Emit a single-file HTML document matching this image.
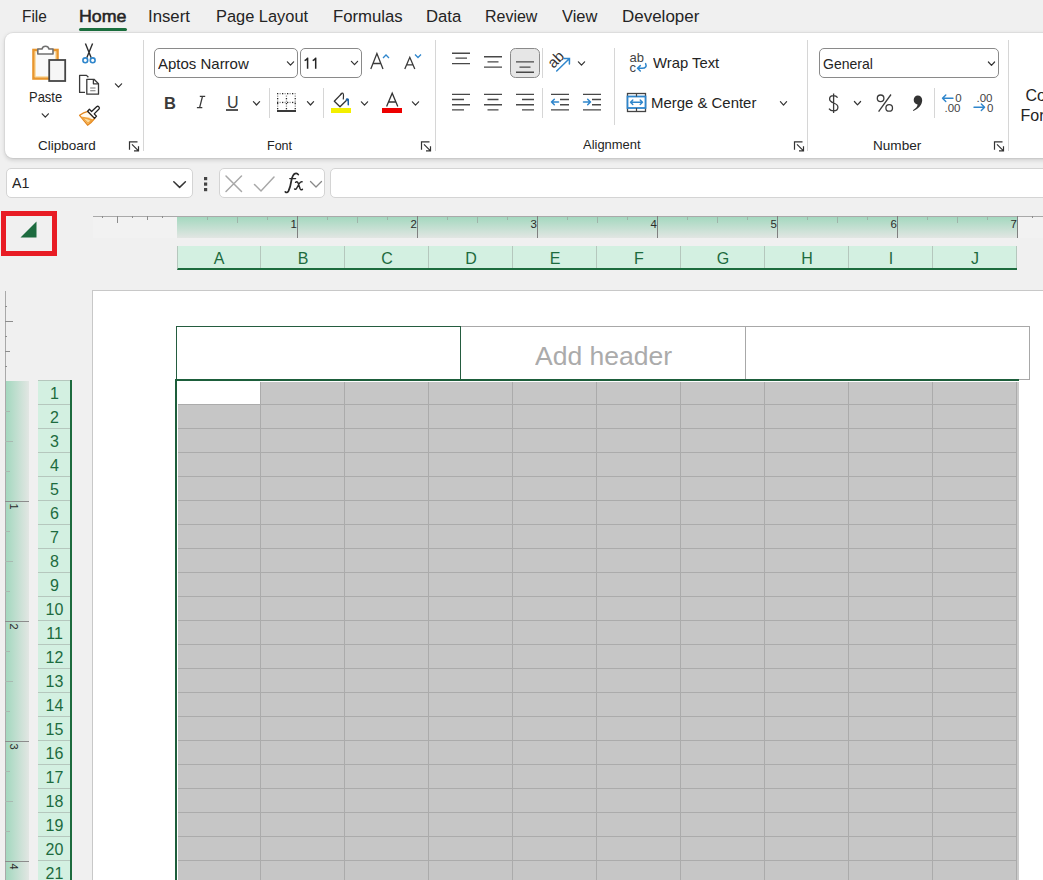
<!DOCTYPE html>
<html><head><meta charset="utf-8">
<style>
*{box-sizing:border-box;margin:0;padding:0}
html,body{width:1043px;height:880px;overflow:hidden;background:#f0f0f0;font-family:"Liberation Sans",sans-serif;color:#242424}
.a{position:absolute}
.t{position:absolute;white-space:nowrap;line-height:1}
.tab{position:absolute;top:8px;font-size:16.5px;line-height:1;white-space:nowrap;color:#242424}
#ribbon{position:absolute;left:5px;top:33px;width:1100px;height:125px;background:#fff;border-radius:8px;box-shadow:0 0 0 1px rgba(0,0,0,0.04),0 1.5px 4px rgba(0,0,0,0.16)}
.sep{position:absolute;width:1px;background:#d6d6d6}
.lbl{position:absolute;top:139px;font-size:13px;line-height:1;white-space:nowrap;color:#242424}
.chev{position:absolute}
.box{position:absolute;border:1px solid #8a8a8a;border-radius:5px;background:#fff}
</style></head><body>
<!-- tabs -->
<div id="tFile" class="tab" style="left:21.72px;font-size:17.4px;top:7.80px;transform-origin:0 0;transform:scaleX(0.8846)">File</div>
<div id="tHome" class="tab" style="left:78.97px;-webkit-text-stroke:0.55px #242424;font-size:17.4px;top:8.00px;transform-origin:0 0;transform:scaleX(1.0232)">Home</div>
<div class="a" style="left:79px;top:28px;width:48px;height:3px;border-radius:2px;background:#1a6e3d"></div>
<div id="tInsert" class="tab" style="left:148.44px;font-size:17.4px;top:8.00px;transform-origin:0 0;transform:scaleX(0.9631)">Insert</div>
<div id="tPage" class="tab" style="left:216.15px;font-size:17.4px;top:8.30px;transform-origin:0 0;transform:scaleX(0.9433)">Page Layout</div>
<div id="tFormulas" class="tab" style="left:333.14px;font-size:17.4px;top:8.20px;transform-origin:0 0;transform:scaleX(0.9620)">Formulas</div>
<div id="tData" class="tab" style="left:425.85px;font-size:17.4px;top:8.00px;transform-origin:0 0;transform:scaleX(0.9585)">Data</div>
<div id="tReview" class="tab" style="left:485.07px;font-size:17.4px;top:8.00px;transform-origin:0 0;transform:scaleX(0.9179)">Review</div>
<div id="tView" class="tab" style="left:562.40px;font-size:17.4px;top:8.00px;transform-origin:0 0;transform:scaleX(0.9474)">View</div>
<div id="tDev" class="tab" style="left:622.02px;font-size:17.4px;top:8.00px;transform-origin:0 0;transform:scaleX(0.9757)">Developer</div>

<div id="ribbon"></div>


<!-- ribbon content -->
<div class="sep" style="left:143px;top:40px;height:111px"></div>
<div class="sep" style="left:435px;top:40px;height:111px"></div>
<div class="sep" style="left:807px;top:40px;height:111px"></div>
<div class="sep" style="left:1008px;top:40px;height:111px"></div>
<div class="sep" style="left:269px;top:88px;height:30px"></div>
<div class="sep" style="left:323px;top:88px;height:30px"></div>
<div class="sep" style="left:542px;top:48px;height:30px"></div>
<div class="sep" style="left:542px;top:88px;height:30px"></div>
<div class="sep" style="left:934px;top:88px;height:30px"></div>
<div class="sep" style="left:614px;top:48px;height:77px"></div>

<div id="lClip" class="lbl" style="left:37.50px;font-size:13.3px;top:138.50px;transform-origin:0 0;transform:scaleX(1.0125)">Clipboard</div>
<div id="lFont" class="lbl" style="left:266.74px;font-size:12.9px;top:140.00px;transform-origin:0 0;transform:scaleX(0.9720)">Font</div>
<div id="lAlign" class="lbl" style="left:583.00px;font-size:13.1px;top:138.40px;transform-origin:0 0;transform:scaleX(0.9881)">Alignment</div>
<div id="lNum" class="lbl" style="left:873.36px;font-size:13px;top:138.70px;transform-origin:0 0;transform:scaleX(1.0444)">Number</div>
<div id="xPaste" class="t" style="left:29.14px;top:88.80px;font-size:15px;transform-origin:0 0;transform:scaleX(0.8625)">Paste</div>
<!-- font boxes -->
<div class="box" style="left:154px;top:48px;width:144px;height:30px"></div>
<div id="xAptos" class="t" style="left:157.80px;top:55.60px;font-size:15px;transform-origin:0 0;transform:scaleX(0.9989)">Aptos Narrow</div>
<div class="box" style="left:300px;top:48px;width:62px;height:30px"></div>
<svg class="a" style="left:300px;top:52px" width="24" height="22"><path d="M4.6 8.6 Q6.6 7.6 7.6 6.2 L7.6 16.8 M12.7 8.6 Q14.7 7.6 15.7 6.2 L15.7 16.8" fill="none" stroke="#242424" stroke-width="1.5" stroke-linejoin="round"/></svg>
<div class="box" style="left:819px;top:48px;width:180px;height:30px"></div>
<div id="xGeneral" class="t" style="left:822.80px;top:55.70px;font-size:15px;transform-origin:0 0;transform:scaleX(0.9341)">General</div>
<div id="xB" class="t" style="left:164px;top:95px;font-size:16.5px;font-weight:bold;color:#3a3a3a">B</div>
<svg class="a" style="left:190px;top:90px" width="22" height="22"><path d="M9.8 6.4 L15.2 6.4 M12.5 6.4 L9.6 17.6 M6.9 17.6 L12.3 17.6" fill="none" stroke="#3a3a3a" stroke-width="1.3"/></svg>
<div id="xU" class="t" style="left:227px;top:95px;font-size:16px;color:#3a3a3a">U</div>
<div class="a" style="left:226px;top:109px;width:12px;height:2px;background:#555"></div>
<div id="xWrap" class="t" style="left:652.60px;top:55.30px;font-size:15px;transform-origin:0 0;transform:scaleX(0.9881)">Wrap Text</div>
<div id="xMerge" class="t" style="left:651.40px;top:94.90px;font-size:15px;transform-origin:0 0;transform:scaleX(0.9953)">Merge &amp; Center</div>
<div id="xCo" class="t" style="left:1025.5px;top:87.8px;font-size:16px">Co</div>
<div id="xFor" class="t" style="left:1020.6px;top:107.8px;font-size:16px">For</div>
<svg class="a" style="left:0;top:0" width="1043" height="160">
<g fill="none" stroke="#333" stroke-width="1.2" stroke-linecap="round" stroke-linejoin="round">
<path d="M42.20 113.80 L45.30 117.20 L48.40 113.80"/>
<path d="M115.40 83.80 L118.50 87.20 L121.60 83.80"/>
<path d="M287.40 61.80 L290.50 65.20 L293.60 61.80"/>
<path d="M351.40 61.30 L354.50 64.70 L357.60 61.30"/>
<path d="M253.40 101.60 L256.50 105.00 L259.60 101.60"/>
<path d="M307.40 101.60 L310.50 105.00 L313.60 101.60"/>
<path d="M361.40 101.80 L364.50 105.20 L367.60 101.80"/>
<path d="M412.40 101.80 L415.50 105.20 L418.60 101.80"/>
<path d="M578.40 61.80 L581.50 65.20 L584.60 61.80"/>
<path d="M780.40 101.70 L783.50 105.10 L786.60 101.70"/>
<path d="M988.40 62.00 L991.50 65.40 L994.60 62.00"/>
<path d="M854.40 101.50 L857.50 104.90 L860.60 101.50"/>
</g>
<!-- paste -->
<rect x="33.5" y="50" width="24" height="28.5" fill="#f9f9f9" stroke="#e8962e" stroke-width="2.6"/>
<rect x="35.2" y="51.8" width="20.6" height="25" fill="none" stroke="#fbd48c" stroke-width="1"/>
<path d="M37.8 54 L37.8 49 L42 49 A3.6 3.6 0 0 1 49 49 L53 49 L53 54 Z" fill="#fff" stroke="#707070" stroke-width="1.6" stroke-linejoin="round"/>
<rect x="49.2" y="60" width="16" height="21" fill="#f6f6f6" stroke="#454545" stroke-width="1.8"/>
<!-- scissors -->
<g stroke="#2e2e2e" stroke-width="1.4" fill="none"><path d="M85.4 43.6 L91.2 57.8 M92.6 43.6 L86.8 57.8"/></g>
<g stroke="#2f86cc" stroke-width="1.6" fill="none"><circle cx="85.3" cy="60.3" r="2.4"/><circle cx="92.7" cy="60.3" r="2.4"/></g>
<!-- copy -->
<g stroke="#3a3a3a" stroke-width="1.3" fill="none" stroke-linejoin="round">
<path d="M85 92.4 L79.6 92.4 L79.6 75.4 L86.5 75.4 L88.4 77.3"/>
<path d="M86.8 79.3 L94 79.3 L98.5 83.8 L98.5 94.2 L86.8 94.2 Z" fill="#fff"/>
<path d="M93.4 79.3 L93.4 83.8 L98.5 83.8"/>
</g>
<g stroke="#777" stroke-width="1.1"><path d="M90.2 88 L95.5 88 M90.2 90.8 L95.5 90.8"/></g>
<!-- format painter -->
<path d="M87.8 111.4 Q83.5 112.6 79.6 115.3 L87.6 125.2 Q91.6 122.4 94.6 118.5 Z" fill="#fffaf0" stroke="#e3861c" stroke-width="1.3" stroke-linejoin="round"/>
<path d="M81 116.6 Q87.5 117.2 93.4 119.6 Q91 122.6 87.8 124.3 Z" fill="#f0a13a"/>
<path d="M84 118.6 Q87.5 119 90.3 120.4 Q89.2 121.7 87.9 122.4 Z" fill="#fdd998"/>
<path d="M87.6 111.2 L89.4 109.3 L91.6 111.5 L96.6 106.7 Q97.8 105.8 98.9 106.9 Q99.9 108 99 109 L94.2 113.9 L96.5 116.2 L94.6 118.4 Z" fill="#fff" stroke="#222" stroke-width="1.3" stroke-linejoin="round"/>
<!-- grow/shrink font -->
<g fill="none" stroke="#3a3a3a" stroke-width="1.3"><path d="M370.8 69 L376.9 53.6 L383 69 M373.2 63.5 L380.6 63.5"/><path d="M404.8 69 L409.8 57.3 L414.8 69 M406.6 64.8 L413 64.8"/></g>
<g fill="none" stroke="#2f86cc" stroke-width="1.3"><path d="M383 58 L386 55 L389 58"/><path d="M415 54.5 L418 57.5 L421 54.5"/></g>
<!-- borders -->
<rect x="277.00" y="93.00" width="1.3" height="1.3" fill="#2a2a2a"/>
<rect x="277.00" y="101.80" width="1.3" height="1.3" fill="#2a2a2a"/>
<rect x="279.50" y="93.00" width="1.3" height="1.3" fill="#9a9a9a"/>
<rect x="279.50" y="101.80" width="1.3" height="1.3" fill="#9a9a9a"/>
<rect x="282.00" y="93.00" width="1.3" height="1.3" fill="#2a2a2a"/>
<rect x="282.00" y="101.80" width="1.3" height="1.3" fill="#2a2a2a"/>
<rect x="284.50" y="93.00" width="1.3" height="1.3" fill="#9a9a9a"/>
<rect x="284.50" y="101.80" width="1.3" height="1.3" fill="#9a9a9a"/>
<rect x="287.00" y="93.00" width="1.3" height="1.3" fill="#2a2a2a"/>
<rect x="287.00" y="101.80" width="1.3" height="1.3" fill="#2a2a2a"/>
<rect x="289.50" y="93.00" width="1.3" height="1.3" fill="#9a9a9a"/>
<rect x="289.50" y="101.80" width="1.3" height="1.3" fill="#9a9a9a"/>
<rect x="292.00" y="93.00" width="1.3" height="1.3" fill="#2a2a2a"/>
<rect x="292.00" y="101.80" width="1.3" height="1.3" fill="#2a2a2a"/>
<rect x="294.50" y="93.00" width="1.3" height="1.3" fill="#9a9a9a"/>
<rect x="294.50" y="101.80" width="1.3" height="1.3" fill="#9a9a9a"/>
<rect x="277.00" y="95.50" width="1.3" height="1.3" fill="#9a9a9a"/>
<rect x="285.80" y="95.50" width="1.3" height="1.3" fill="#9a9a9a"/>
<rect x="294.60" y="95.50" width="1.3" height="1.3" fill="#9a9a9a"/>
<rect x="277.00" y="98.00" width="1.3" height="1.3" fill="#2a2a2a"/>
<rect x="285.80" y="98.00" width="1.3" height="1.3" fill="#2a2a2a"/>
<rect x="294.60" y="98.00" width="1.3" height="1.3" fill="#2a2a2a"/>
<rect x="277.00" y="100.50" width="1.3" height="1.3" fill="#9a9a9a"/>
<rect x="285.80" y="100.50" width="1.3" height="1.3" fill="#9a9a9a"/>
<rect x="294.60" y="100.50" width="1.3" height="1.3" fill="#9a9a9a"/>
<rect x="277.00" y="103.00" width="1.3" height="1.3" fill="#2a2a2a"/>
<rect x="285.80" y="103.00" width="1.3" height="1.3" fill="#2a2a2a"/>
<rect x="294.60" y="103.00" width="1.3" height="1.3" fill="#2a2a2a"/>
<rect x="277.00" y="105.50" width="1.3" height="1.3" fill="#9a9a9a"/>
<rect x="285.80" y="105.50" width="1.3" height="1.3" fill="#9a9a9a"/>
<rect x="294.60" y="105.50" width="1.3" height="1.3" fill="#9a9a9a"/>
<rect x="277.00" y="108.00" width="1.3" height="1.3" fill="#2a2a2a"/>
<rect x="285.80" y="108.00" width="1.3" height="1.3" fill="#2a2a2a"/>
<rect x="294.60" y="108.00" width="1.3" height="1.3" fill="#2a2a2a"/>
<rect x="277" y="110" width="19" height="2" fill="#3a3a3a"/>
<!-- fill color -->
<path d="M341.6 93.6 L334.3 101.2 L340 106.8 L346.6 100.2" fill="#fff" stroke="#333" stroke-width="1.3" stroke-linejoin="round"/>
<path d="M340.5 94.8 Q341.5 92.6 343 93.4 Q343.6 94 343.5 96 L343.3 99" fill="none" stroke="#333" stroke-width="1.2" stroke-linecap="round"/>
<circle cx="347.2" cy="99.6" r="1.4" fill="#1f5fa0"/>
<path d="M348.2 99.6 L348.3 104.8" stroke="#1f5fa0" stroke-width="1.5" stroke-linecap="round"/>
<rect x="331" y="108" width="20" height="5" fill="#f3ef00"/>
<!-- font color -->
<path d="M386.6 106.6 L392.2 93.2 L397.8 106.6 M388.6 102 L395.8 102" fill="none" stroke="#333" stroke-width="1.3"/>
<rect x="382" y="108" width="20" height="5" fill="#ee0000"/>
<!-- alignment lines -->
<g stroke="#484848" stroke-width="1.4">
<path d="M452 53.3 L470 53.3 M455.5 58.1 L467 58.1 M452 63.6 L470 63.6"/>
<path d="M484 56.7 L502 56.7 M487.5 61.9 L498.5 61.9 M484 67.1 L502 67.1"/>
<path d="M452 94.4 L470 94.4 M452 99.5 L464 99.5 M452 104.7 L470 104.7 M452 109.9 L464 109.9"/>
<path d="M484 94.4 L502 94.4 M487.5 99.5 L498.5 99.5 M484 104.7 L502 104.7 M487.5 109.9 L498.5 109.9"/>
<path d="M516 94.4 L534 94.4 M522 99.5 L534 99.5 M516 104.7 L534 104.7 M522 109.9 L534 109.9"/>
<path d="M551 94.4 L569 94.4 M560 99.5 L569 99.5 M560 104.7 L569 104.7 M551 109.9 L569 109.9"/>
<path d="M583 94.4 L601 94.4 M592 99.5 L601 99.5 M592 104.7 L601 104.7 M583 109.9 L601 109.9"/>
</g>
<rect x="510.5" y="48.5" width="29" height="29" rx="5" fill="#e6e6e6" stroke="#8a8a8a" stroke-width="1"/>
<g stroke="#484848" stroke-width="1.4"><path d="M516 61.9 L534 61.9 M519.5 67.1 L530.5 67.1 M516 72.3 L534 72.3"/></g>
<g stroke="#2f86cc" stroke-width="1.5" fill="none" stroke-linecap="round" stroke-linejoin="round">
<path d="M551.5 102 L558.5 102 M554.3 99.2 L551.5 102 L554.3 104.8"/>
<path d="M583.5 102 L590.5 102 M587.7 99.2 L590.5 102 L587.7 104.8"/>
</g>
<!-- orientation -->
<text x="0" y="0" font-family="Liberation Sans" font-size="15" fill="#333" transform="translate(553.4,68.9) rotate(-45)">ab</text>
<g stroke="#2f86cc" stroke-width="1.5" fill="none" stroke-linecap="round"><path d="M556.7 71 L569.5 58.5 M564 58.6 L569.5 58.5 L569.4 64"/></g>
<!-- wrap text -->
<text x="629.6" y="62.3" font-family="Liberation Sans" font-size="13" fill="#444">ab</text>
<text x="629.6" y="71.9" font-family="Liberation Sans" font-size="13" fill="#444">c</text>
<path d="M645.6 63.6 Q647.5 68 642 68.3 L637.8 68.3 M640.3 65.6 L637.5 68.3 L640.3 71" fill="none" stroke="#2f86cc" stroke-width="1.5" stroke-linecap="round" stroke-linejoin="round"/>
<!-- merge -->
<rect x="627.5" y="93.5" width="18" height="18" fill="#fff" stroke="#444" stroke-width="1.3"/>
<rect x="627.5" y="96.5" width="18" height="11.5" fill="#fff" stroke="#2f86cc" stroke-width="1.8"/>
<path d="M636.5 93.5 L636.5 96.5 M636.5 108 L636.5 111.5" stroke="#444" stroke-width="1.2"/>
<path d="M630.5 102.2 L642.5 102.2 M632.8 100 L630.5 102.2 L632.8 104.4 M640.2 100 L642.5 102.2 L640.2 104.4" fill="none" stroke="#2f86cc" stroke-width="1.4" stroke-linecap="round" stroke-linejoin="round"/>
<!-- comma -->
<path d="M837.6 97.6 C836.6 96.2 835.2 95.6 833.4 95.6 C830.9 95.6 829.6 97.1 829.6 99.1 C829.6 101.5 831.9 102.4 833.6 103 C835.7 103.7 837.9 104.8 837.9 107.3 C837.9 109.5 836 110.9 833.5 110.9 C831.4 110.9 829.9 110 829 108.6 M833.6 93.4 L833.6 113" fill="none" stroke="#3a3a3a" stroke-width="1.3"/>
<circle cx="880.6" cy="98.3" r="3.3" fill="none" stroke="#3a3a3a" stroke-width="1.3"/>
<circle cx="889.2" cy="107.9" r="3.3" fill="none" stroke="#3a3a3a" stroke-width="1.3"/>
<path d="M878.6 111.6 L891 94.5" stroke="#3a3a3a" stroke-width="1.3"/>
<path d="M917.8 95.4 C920.2 95.4 922.2 97.2 922.2 100 C922.2 104.8 918.6 108.8 913.4 111 L912.9 110.2 C916 108.4 917.4 106.5 917.6 104.5 C915.4 104.3 913.7 102.5 913.7 100 C913.7 97.3 915.5 95.4 917.8 95.4 Z" fill="#333"/>
<!-- decimals -->
<g font-family="Liberation Sans" font-size="11.5" fill="#444">
<text x="955.3" y="101.6">0</text><text x="944.5" y="111.8">.00</text>
<text x="976.5" y="101.6">.00</text><text x="987" y="111.8">0</text>
</g>
<g stroke="#2f86cc" stroke-width="1.4" fill="none" stroke-linecap="round" stroke-linejoin="round">
<path d="M942.5 98.3 L953 98.3 M945.8 95 L942.5 98.3 L945.8 101.6"/>
<path d="M974 107.3 L984.6 107.3 M981.3 104 L984.6 107.3 L981.3 110.6"/>
</g>
<!-- dialog launchers -->
<g stroke="#333" stroke-width="1.2" fill="none">
<path d="M129.5 149.8 L129.5 141.8 L137.5 141.8 M132 144.3 L138.5 150.8 M138.5 146.3 L138.5 150.8 L134 150.8"/>
<path d="M421.5 149.8 L421.5 141.8 L429.5 141.8 M424 144.3 L430.5 150.8 M430.5 146.3 L430.5 150.8 L426 150.8"/>
<path d="M794.5 149.8 L794.5 141.8 L802.5 141.8 M797 144.3 L803.5 150.8 M803.5 146.3 L803.5 150.8 L799 150.8"/>
<path d="M994.5 149.8 L994.5 141.8 L1002.5 141.8 M997 144.3 L1003.5 150.8 M1003.5 146.3 L1003.5 150.8 L999 150.8"/>
</g>
</svg>

<!-- formula bar -->
<div class="box" style="left:6px;top:168px;width:187px;height:30px;border-color:#d4d4d4;border-radius:5px"></div>
<div id="xA1" class="t" style="left:12.48px;top:174.50px;font-size:15px;transform-origin:0 0;transform:scaleX(0.9492)">A1</div>
<div class="box" style="left:219px;top:168px;width:106px;height:30px;border-color:#d4d4d4;border-radius:5px"></div>
<div class="box" style="left:330px;top:168px;width:800px;height:30px;border-color:#d4d4d4;border-radius:5px"></div>


<svg class="a" style="left:0;top:160px" width="400" height="40">
<g fill="none" stroke="#333" stroke-width="1.5" stroke-linecap="round" stroke-linejoin="round"><path d="M173.8 21.8 L179.6 27.4 L185.4 21.8"/></g>
<g fill="#444"><rect x="204" y="17" width="3.2" height="3.2"/><rect x="204" y="22.5" width="3.2" height="3.2"/><rect x="204" y="28" width="3.2" height="3.2"/></g>
<g fill="none" stroke="#a8a8a8" stroke-width="1.5" stroke-linecap="round"><path d="M226 16 L241.5 31.5 M241.5 16 L226 31.5"/><path d="M254.5 24.5 L261 31 L274 17"/></g>
<g fill="none" stroke="#888" stroke-width="1.3" stroke-linecap="round" stroke-linejoin="round"><path d="M310.5 21.5 L316 27 L321.5 21.5"/></g>
</svg>
<svg class="a" style="left:280px;top:168px" width="30" height="30"><g fill="none" stroke="#2a2a2a" stroke-linecap="round"><path d="M5.3 23.8 Q7 25.5 8.5 23 Q10.3 19.5 11.3 13 Q12.6 6.3 15 5.6 Q17.3 5 18.3 6.6" stroke-width="1.7"/><path d="M9.8 10.6 L15.6 10.6" stroke-width="1.4"/><path d="M15.6 14.3 Q17.5 13 18.3 15.5 L20 20.5 Q20.8 22.5 22.4 21.3 M22 13.8 Q20.5 13.3 19 16 L16.8 20 Q15.8 22 14.6 21" stroke-width="1.5"/></g></svg>

<!-- select-all red box -->
<div class="a" style="left:1px;top:211px;width:56px;height:45px;border:5px solid #e81c24"></div>
<svg class="a" style="left:20px;top:221px" width="17" height="17"><path d="M0.5 16.5 L16.5 0.5 L16.5 16.5 Z" fill="#1d6b3f"/></svg>

<!-- page -->
<div class="a" style="left:92px;top:290px;width:1000px;height:700px;background:#fff;border-left:1px solid #c8c8c8;border-top:1px solid #c8c8c8"></div>


<!-- horizontal ruler -->
<div class="a" style="left:93px;top:216px;width:950px;height:1px;background:#a9a9a9"></div>
<div class="a" style="left:93px;top:217px;width:84px;height:21px;background:#f2f2f2"></div>
<div class="a" style="left:1018px;top:217px;width:25px;height:21px;background:#f2f2f2"></div>
<div class="a" style="left:177px;top:217px;width:841px;height:21px;background:linear-gradient(#a4d8bf,#e2e6e3)"></div>
<svg class="a" style="left:0;top:0" width="1043" height="260">
<g stroke-width="1" shape-rendering="crispEdges">
<line x1="102.5" y1="216" x2="102.5" y2="218" stroke="#8c8c8c"/>
<line x1="117.5" y1="216" x2="117.5" y2="223" stroke="#8c8c8c"/>
<line x1="132.5" y1="216" x2="132.5" y2="218" stroke="#8c8c8c"/>
<line x1="147.5" y1="216" x2="147.5" y2="220" stroke="#8c8c8c"/>
<line x1="162.5" y1="216" x2="162.5" y2="218" stroke="#8c8c8c"/>
<line x1="207.5" y1="216" x2="207.5" y2="220" stroke="#9fb3a9"/>
<line x1="237.5" y1="216" x2="237.5" y2="223" stroke="#9fb3a9"/>
<line x1="267.5" y1="216" x2="267.5" y2="220" stroke="#9fb3a9"/>
<line x1="297.5" y1="216" x2="297.5" y2="238" stroke="#808080"/>
<line x1="327.5" y1="216" x2="327.5" y2="220" stroke="#9fb3a9"/>
<line x1="357.5" y1="216" x2="357.5" y2="223" stroke="#9fb3a9"/>
<line x1="387.5" y1="216" x2="387.5" y2="220" stroke="#9fb3a9"/>
<line x1="417.5" y1="216" x2="417.5" y2="238" stroke="#808080"/>
<line x1="447.5" y1="216" x2="447.5" y2="220" stroke="#9fb3a9"/>
<line x1="477.5" y1="216" x2="477.5" y2="223" stroke="#9fb3a9"/>
<line x1="507.5" y1="216" x2="507.5" y2="220" stroke="#9fb3a9"/>
<line x1="537.5" y1="216" x2="537.5" y2="238" stroke="#808080"/>
<line x1="567.5" y1="216" x2="567.5" y2="220" stroke="#9fb3a9"/>
<line x1="597.5" y1="216" x2="597.5" y2="223" stroke="#9fb3a9"/>
<line x1="627.5" y1="216" x2="627.5" y2="220" stroke="#9fb3a9"/>
<line x1="657.5" y1="216" x2="657.5" y2="238" stroke="#808080"/>
<line x1="687.5" y1="216" x2="687.5" y2="220" stroke="#9fb3a9"/>
<line x1="717.5" y1="216" x2="717.5" y2="223" stroke="#9fb3a9"/>
<line x1="747.5" y1="216" x2="747.5" y2="220" stroke="#9fb3a9"/>
<line x1="777.5" y1="216" x2="777.5" y2="238" stroke="#808080"/>
<line x1="807.5" y1="216" x2="807.5" y2="220" stroke="#9fb3a9"/>
<line x1="837.5" y1="216" x2="837.5" y2="223" stroke="#9fb3a9"/>
<line x1="867.5" y1="216" x2="867.5" y2="220" stroke="#9fb3a9"/>
<line x1="897.5" y1="216" x2="897.5" y2="238" stroke="#808080"/>
<line x1="927.5" y1="216" x2="927.5" y2="220" stroke="#9fb3a9"/>
<line x1="957.5" y1="216" x2="957.5" y2="223" stroke="#9fb3a9"/>
<line x1="987.5" y1="216" x2="987.5" y2="220" stroke="#9fb3a9"/>
<line x1="1017.5" y1="216" x2="1017.5" y2="238" stroke="#808080"/>
<line x1="1032.5" y1="216" x2="1032.5" y2="218" stroke="#8c8c8c"/>
</g>
<g font-family="Liberation Sans" font-size="11.5" fill="#2b2b2b">
<text x="290.4" y="227.8">1</text>
<text x="410.4" y="227.8">2</text>
<text x="530.4" y="227.8">3</text>
<text x="650.4" y="227.8">4</text>
<text x="770.4" y="227.8">5</text>
<text x="890.4" y="227.8">6</text>
<text x="1010.4" y="227.8">7</text>
</g>
</svg>
<!-- column headers -->
<div class="a" style="left:177px;top:246px;width:840px;height:24px;background:#d3f0e1;border-bottom:2px solid #1d6b3e;border-left:1px solid #b5c7bd"></div>
<div class="t" style="left:177px;top:251px;width:84px;text-align:center;font-size:16px;color:#1d6b3e">A</div>
<div class="t" style="left:261px;top:251px;width:84px;text-align:center;font-size:16px;color:#1d6b3e">B</div>
<div class="a" style="left:260px;top:246px;width:1px;height:22px;background:#b5c7bd"></div>
<div class="t" style="left:345px;top:251px;width:84px;text-align:center;font-size:16px;color:#1d6b3e">C</div>
<div class="a" style="left:344px;top:246px;width:1px;height:22px;background:#b5c7bd"></div>
<div class="t" style="left:429px;top:251px;width:84px;text-align:center;font-size:16px;color:#1d6b3e">D</div>
<div class="a" style="left:428px;top:246px;width:1px;height:22px;background:#b5c7bd"></div>
<div class="t" style="left:513px;top:251px;width:84px;text-align:center;font-size:16px;color:#1d6b3e">E</div>
<div class="a" style="left:512px;top:246px;width:1px;height:22px;background:#b5c7bd"></div>
<div class="t" style="left:597px;top:251px;width:84px;text-align:center;font-size:16px;color:#1d6b3e">F</div>
<div class="a" style="left:596px;top:246px;width:1px;height:22px;background:#b5c7bd"></div>
<div class="t" style="left:681px;top:251px;width:84px;text-align:center;font-size:16px;color:#1d6b3e">G</div>
<div class="a" style="left:680px;top:246px;width:1px;height:22px;background:#b5c7bd"></div>
<div class="t" style="left:765px;top:251px;width:84px;text-align:center;font-size:16px;color:#1d6b3e">H</div>
<div class="a" style="left:764px;top:246px;width:1px;height:22px;background:#b5c7bd"></div>
<div class="t" style="left:849px;top:251px;width:84px;text-align:center;font-size:16px;color:#1d6b3e">I</div>
<div class="a" style="left:848px;top:246px;width:1px;height:22px;background:#b5c7bd"></div>
<div class="t" style="left:933px;top:251px;width:84px;text-align:center;font-size:16px;color:#1d6b3e">J</div>
<div class="a" style="left:932px;top:246px;width:1px;height:22px;background:#b5c7bd"></div>
<div class="a" style="left:1016px;top:246px;width:1px;height:22px;background:#b5c7bd"></div>
<!-- vertical ruler -->
<div class="a" style="left:5px;top:291px;width:1px;height:600px;background:#a9a9a9"></div>
<div class="a" style="left:6px;top:381px;width:23px;height:520px;background:linear-gradient(to right,#a4d8bf,#e2e6e3)"></div>
<svg class="a" style="left:0;top:280px" width="40" height="600">
<g stroke-width="1" shape-rendering="crispEdges">
<line x1="5" y1="26.5" x2="7" y2="26.5" stroke="#8c8c8c"/>
<line x1="5" y1="41.5" x2="13" y2="41.5" stroke="#8c8c8c"/>
<line x1="5" y1="56.5" x2="7" y2="56.5" stroke="#8c8c8c"/>
<line x1="5" y1="71.5" x2="10" y2="71.5" stroke="#8c8c8c"/>
<line x1="5" y1="86.5" x2="7" y2="86.5" stroke="#8c8c8c"/>
<line x1="5" y1="131.5" x2="10" y2="131.5" stroke="#a9bab1"/>
<line x1="5" y1="161.5" x2="13" y2="161.5" stroke="#a9bab1"/>
<line x1="5" y1="191.5" x2="10" y2="191.5" stroke="#a9bab1"/>
<line x1="5" y1="221.5" x2="29" y2="221.5" stroke="#8c8c8c"/>
<line x1="5" y1="251.5" x2="10" y2="251.5" stroke="#a9bab1"/>
<line x1="5" y1="281.5" x2="13" y2="281.5" stroke="#a9bab1"/>
<line x1="5" y1="311.5" x2="10" y2="311.5" stroke="#a9bab1"/>
<line x1="5" y1="341.5" x2="29" y2="341.5" stroke="#8c8c8c"/>
<line x1="5" y1="371.5" x2="10" y2="371.5" stroke="#a9bab1"/>
<line x1="5" y1="401.5" x2="13" y2="401.5" stroke="#a9bab1"/>
<line x1="5" y1="431.5" x2="10" y2="431.5" stroke="#a9bab1"/>
<line x1="5" y1="461.5" x2="29" y2="461.5" stroke="#8c8c8c"/>
<line x1="5" y1="491.5" x2="10" y2="491.5" stroke="#a9bab1"/>
<line x1="5" y1="521.5" x2="13" y2="521.5" stroke="#a9bab1"/>
<line x1="5" y1="551.5" x2="10" y2="551.5" stroke="#a9bab1"/>
<line x1="5" y1="581.5" x2="29" y2="581.5" stroke="#8c8c8c"/>
<line x1="5" y1="611.5" x2="10" y2="611.5" stroke="#a9bab1"/>
<line x1="5" y1="641.5" x2="13" y2="641.5" stroke="#a9bab1"/>
<line x1="5" y1="671.5" x2="10" y2="671.5" stroke="#a9bab1"/>
</g>
<g font-family="Liberation Sans" font-size="11" fill="#2b2b2b">
<text transform="translate(9.5,223.5) rotate(90)" x="0" y="0">1</text>
<text transform="translate(9.5,343.5) rotate(90)" x="0" y="0">2</text>
<text transform="translate(9.5,463.5) rotate(90)" x="0" y="0">3</text>
<text transform="translate(9.5,583.5) rotate(90)" x="0" y="0">4</text>
</g>
</svg>
<!-- row headers -->
<div class="a" style="left:38px;top:380px;width:34px;height:520px;background:#d3f0e1;border-right:2px solid #1d6b3e"></div>
<div class="t" style="left:38px;top:386px;width:33px;text-align:center;font-size:16px;color:#1d6b3e">1</div>
<div class="t" style="left:38px;top:410px;width:33px;text-align:center;font-size:16px;color:#1d6b3e">2</div>
<div class="a" style="left:38px;top:404px;width:32px;height:1px;background:#b5c7bd"></div>
<div class="t" style="left:38px;top:434px;width:33px;text-align:center;font-size:16px;color:#1d6b3e">3</div>
<div class="a" style="left:38px;top:428px;width:32px;height:1px;background:#b5c7bd"></div>
<div class="t" style="left:38px;top:458px;width:33px;text-align:center;font-size:16px;color:#1d6b3e">4</div>
<div class="a" style="left:38px;top:452px;width:32px;height:1px;background:#b5c7bd"></div>
<div class="t" style="left:38px;top:482px;width:33px;text-align:center;font-size:16px;color:#1d6b3e">5</div>
<div class="a" style="left:38px;top:476px;width:32px;height:1px;background:#b5c7bd"></div>
<div class="t" style="left:38px;top:506px;width:33px;text-align:center;font-size:16px;color:#1d6b3e">6</div>
<div class="a" style="left:38px;top:500px;width:32px;height:1px;background:#b5c7bd"></div>
<div class="t" style="left:38px;top:530px;width:33px;text-align:center;font-size:16px;color:#1d6b3e">7</div>
<div class="a" style="left:38px;top:524px;width:32px;height:1px;background:#b5c7bd"></div>
<div class="t" style="left:38px;top:554px;width:33px;text-align:center;font-size:16px;color:#1d6b3e">8</div>
<div class="a" style="left:38px;top:548px;width:32px;height:1px;background:#b5c7bd"></div>
<div class="t" style="left:38px;top:578px;width:33px;text-align:center;font-size:16px;color:#1d6b3e">9</div>
<div class="a" style="left:38px;top:572px;width:32px;height:1px;background:#b5c7bd"></div>
<div class="t" style="left:38px;top:602px;width:33px;text-align:center;font-size:16px;color:#1d6b3e">10</div>
<div class="a" style="left:38px;top:596px;width:32px;height:1px;background:#b5c7bd"></div>
<div class="t" style="left:38px;top:626px;width:33px;text-align:center;font-size:16px;color:#1d6b3e">11</div>
<div class="a" style="left:38px;top:620px;width:32px;height:1px;background:#b5c7bd"></div>
<div class="t" style="left:38px;top:650px;width:33px;text-align:center;font-size:16px;color:#1d6b3e">12</div>
<div class="a" style="left:38px;top:644px;width:32px;height:1px;background:#b5c7bd"></div>
<div class="t" style="left:38px;top:674px;width:33px;text-align:center;font-size:16px;color:#1d6b3e">13</div>
<div class="a" style="left:38px;top:668px;width:32px;height:1px;background:#b5c7bd"></div>
<div class="t" style="left:38px;top:698px;width:33px;text-align:center;font-size:16px;color:#1d6b3e">14</div>
<div class="a" style="left:38px;top:692px;width:32px;height:1px;background:#b5c7bd"></div>
<div class="t" style="left:38px;top:722px;width:33px;text-align:center;font-size:16px;color:#1d6b3e">15</div>
<div class="a" style="left:38px;top:716px;width:32px;height:1px;background:#b5c7bd"></div>
<div class="t" style="left:38px;top:746px;width:33px;text-align:center;font-size:16px;color:#1d6b3e">16</div>
<div class="a" style="left:38px;top:740px;width:32px;height:1px;background:#b5c7bd"></div>
<div class="t" style="left:38px;top:770px;width:33px;text-align:center;font-size:16px;color:#1d6b3e">17</div>
<div class="a" style="left:38px;top:764px;width:32px;height:1px;background:#b5c7bd"></div>
<div class="t" style="left:38px;top:794px;width:33px;text-align:center;font-size:16px;color:#1d6b3e">18</div>
<div class="a" style="left:38px;top:788px;width:32px;height:1px;background:#b5c7bd"></div>
<div class="t" style="left:38px;top:818px;width:33px;text-align:center;font-size:16px;color:#1d6b3e">19</div>
<div class="a" style="left:38px;top:812px;width:32px;height:1px;background:#b5c7bd"></div>
<div class="t" style="left:38px;top:842px;width:33px;text-align:center;font-size:16px;color:#1d6b3e">20</div>
<div class="a" style="left:38px;top:836px;width:32px;height:1px;background:#b5c7bd"></div>
<div class="t" style="left:38px;top:866px;width:33px;text-align:center;font-size:16px;color:#1d6b3e">21</div>
<div class="a" style="left:38px;top:860px;width:32px;height:1px;background:#b5c7bd"></div>
<div class="a" style="left:38px;top:380px;width:32px;height:1px;background:#b5c7bd"></div>
<!-- header boxes -->
<div class="a" style="left:176px;top:326px;width:854px;height:54px;border:1px solid #a8a8a8;background:#fff"></div>
<div class="a" style="left:745px;top:326px;width:1px;height:54px;background:#a8a8a8"></div>
<div class="a" style="left:176px;top:326px;width:285px;height:54px;border:1px solid #245c3f"></div>
<div id="xAdd" class="t" style="left:535.00px;top:342.50px;color:#ababab;font-size:26.3px;transform-origin:0 0;transform:scaleX(1.0090)">Add header</div>
<!-- grid -->
<div class="a" style="left:178px;top:382px;width:841px;height:520px;background-color:#c6c6c6;background-image:linear-gradient(to right,#ababab 1px,transparent 1px),linear-gradient(to bottom,#ababab 1px,transparent 1px);background-size:84px 100%,100% 24px;background-position:82px 0,0 22px"></div>
<div class="a" style="left:1017px;top:382px;width:2px;height:500px;background:#cbcbcb"></div>
<div class="a" style="left:177px;top:381px;width:83px;height:23px;background:#fff"></div>
<div class="a" style="left:175px;top:379px;width:844px;height:2px;background:#1d5e3b"></div>
<div class="a" style="left:175px;top:379px;width:2px;height:520px;background:#1d5e3b"></div>
</body></html>
